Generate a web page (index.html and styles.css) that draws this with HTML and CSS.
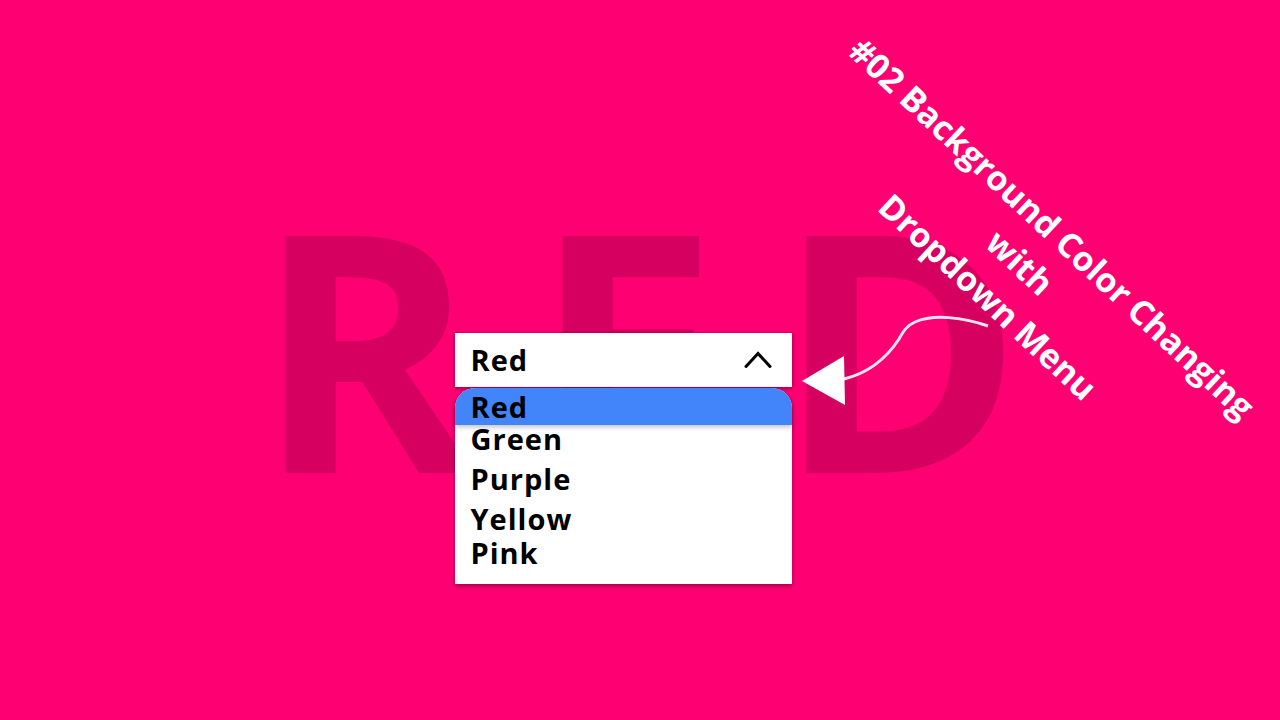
FILE: index.html
```html
<!DOCTYPE html>
<html lang="en">
  <head>
    <meta charset="UTF-8" />
    <meta name="viewport" content="width=device-width, initial-scale=1.0" />
    <title>Background Color Changing</title>
    <link rel="stylesheet" href="styles.css">
  </head>
  <body>
    <main class="stage">
      <h1 class="color-name" id="colorName">RED</h1>

      <div class="picker">
        <div class="picker-head">
          <select id="colorSelect" class="picker-select" aria-label="Color">
            <option>Red</option>
            <option>Green</option>
            <option>Purple</option>
            <option>Yellow</option>
            <option>Pink</option>
          </select>
          <svg class="chevron" viewBox="0 0 28 18" aria-hidden="true">
            <path d="M2 15.5 L14 2.5 L26 15.5" />
          </svg>
        </div>
        <ul class="picker-menu">
          <li><button class="option active" data-color="#ff0073">Red</button></li>
          <li><button class="option short" data-color="#00b359">Green</button></li>
          <li><button class="option" data-color="#8a2be2">Purple</button></li>
          <li><button class="option" data-color="#ffc400">Yellow</button></li>
          <li><button class="option last" data-color="#ff69b4">Pink</button></li>
        </ul>
      </div>

      <p class="caption">
        #02 Background Color Changing<br />with<br />Dropdown Menu
      </p>

      <svg class="arrow" viewBox="0 0 190 94" aria-hidden="true">
        <path class="arrow-line" d="M43 68 C67 62 85 48 98 28 C102 21 105 15 114 11 C132 3 161 6 187 15" />
        <path class="arrow-head" d="M1 70 L43 45 L44 94 Z" />
      </svg>
    </main>

    <script>
      const select = document.getElementById("colorSelect");
      const options = document.querySelectorAll(".option");

      function setColor(name) {
        options.forEach((option) => {
          const match = option.textContent === name;
          option.classList.toggle("active", match);
          if (match) {
            document.body.style.backgroundColor = option.dataset.color;
          }
        });
        select.value = name;
        document.getElementById("colorName").textContent = name.toUpperCase();
      }

      options.forEach((option) => {
        option.addEventListener("click", () => setColor(option.textContent));
      });
      select.addEventListener("change", () => setColor(select.value));
    </script>
  </body>
</html>
```
FILE: styles.css
```css
* {
  margin: 0;
  padding: 0;
  box-sizing: border-box;
  font-family: "Open Sans", "Noto Sans", sans-serif;
}
body {
  background-color: #ff0073;
  overflow: hidden;
}
.stage {
  position: relative;
  min-height: 100vh;
  display: grid;
  place-items: center;
}
.color-name {
  grid-area: 1 / 1;
  margin-left: 56px;
  margin-bottom: 32px;
  font-size: 332px;
  font-weight: 700;
  line-height: 1;
  letter-spacing: 58px;
  color: rgba(0, 0, 0, 0.16);
}
.picker {
  grid-area: 1 / 1;
  z-index: 1;
  width: 337px;
  margin-top: 196px;
  margin-right: 34px;
}
.picker-head {
  display: grid;
  align-items: center;
  background-color: #fff;
  box-shadow: 0 1px 4px rgba(0, 0, 0, 0.5);
}
.picker-select {
  grid-area: 1 / 1;
  width: 100%;
  height: 54px;
  padding: 0 16px;
  appearance: none;
  background: none;
  border: none;
  color: #000;
  font-size: 29px;
  font-weight: 700;
  letter-spacing: 1px;
  cursor: pointer;
}
.chevron {
  grid-area: 1 / 1;
  justify-self: end;
  width: 28px;
  height: 18px;
  margin-right: 20px;
  pointer-events: none;
}
.chevron path {
  fill: none;
  stroke: #000;
  stroke-width: 3;
  stroke-linecap: round;
}
.picker-menu {
  margin-top: 1px;
  padding-bottom: 16px;
  list-style: none;
  background-color: #fff;
  border-radius: 20px 20px 0 0;
  box-shadow: 0 2px 4px rgba(0, 0, 0, 0.4);
}
.option {
  display: block;
  width: 100%;
  height: 40px;
  padding: 0 16px 2px;
  background: none;
  border: none;
  color: #000;
  font-size: 29px;
  font-weight: 700;
  line-height: 38px;
  letter-spacing: 1px;
  text-align: left;
  cursor: pointer;
}
.option.active {
  height: 37px;
  background-color: #4285fb;
  border-radius: 20px 20px 0 0;
  box-shadow: 0 2px 5px rgba(0, 0, 0, 0.25);
}
.option.short {
  height: 35px;
  padding-bottom: 7px;
  line-height: 28px;
}
.option.last {
  height: 28px;
  line-height: 26px;
}
.caption {
  position: absolute;
  top: 192px;
  right: -40px;
  width: 600px;
  color: #fff;
  font-size: 34px;
  font-weight: 700;
  line-height: 47px;
  text-align: center;
  white-space: nowrap;
  transform: rotate(43deg);
}
.arrow {
  position: absolute;
  top: 311px;
  left: 801px;
  width: 190px;
  z-index: 2;
}
.arrow-line {
  fill: none;
  stroke: #ffe3f3;
  stroke-width: 3;
}
.arrow-head {
  fill: #fff;
}
```
